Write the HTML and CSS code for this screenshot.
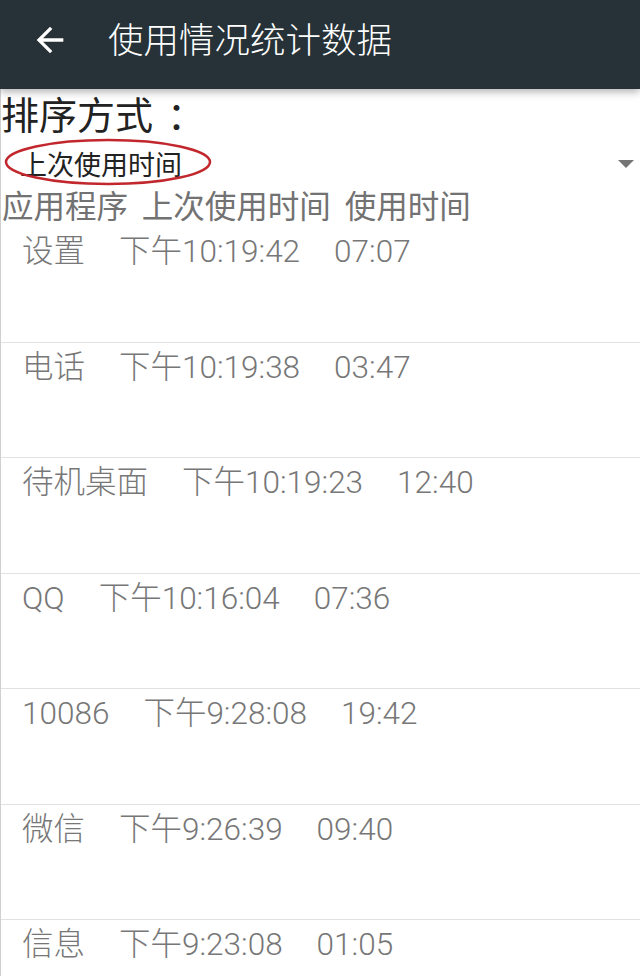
FILE: index.html
```html
<!DOCTYPE html>
<html lang="zh-CN">
<head>
    <meta charset="UTF-8">
    <title>使用情况统计数据</title>
    <link rel="stylesheet" href="styles.css">
</head>
<body>

<header class="toolbar">
    <svg class="back" viewBox="0 0 24 24" width="40" height="40">
        <path d="M20 11H7.83l5.59-5.59L12 4l-8 8 8 8 1.41-1.41L7.83 13H20v-2z" fill="#fff"/>
    </svg>
    <h1 class="title">使用情况统计数据</h1>
</header>

<main class="content">
    <div class="sort-label">排序方式<span class="colon">：</span></div>

    <div class="spinner">
        <span class="spinner-value">上次使用时间</span>
        <span class="spinner-arrow"></span>
        <svg class="mark" viewBox="0 0 210 50" width="210" height="50">
            <ellipse cx="105" cy="25" rx="102" ry="22" fill="none" stroke="#c1272d" stroke-width="2.5"/>
        </svg>
    </div>

    <div class="list-head">应用程序 上次使用时间 使用时间</div>

    <ul class="usage-list">
        <li class="usage-row"><span>设置</span><span>下午10:19:42</span><span>07:07</span></li>
        <li class="usage-row"><span>电话</span><span>下午10:19:38</span><span>03:47</span></li>
        <li class="usage-row"><span>待机桌面</span><span>下午10:19:23</span><span>12:40</span></li>
        <li class="usage-row"><span>QQ</span><span>下午10:16:04</span><span>07:36</span></li>
        <li class="usage-row"><span>10086</span><span>下午9:28:08</span><span>19:42</span></li>
        <li class="usage-row"><span>微信</span><span>下午9:26:39</span><span>09:40</span></li>
        <li class="usage-row"><span>信息</span><span>下午9:23:08</span><span>01:05</span></li>
    </ul>
</main>

</body>
</html>
```

FILE: styles.css
```css
body {
    margin: 0;
    font-family: Roboto, "Noto Sans CJK SC", sans-serif;
    background-color: #fff;
    color: #222;
    overflow: hidden;
}
.toolbar {
    position: relative;
    z-index: 2;
    height: 89px;
    display: flex;
    align-items: center;
    gap: 38px;
    padding-left: 30px;
    padding-bottom: 14px;
    box-sizing: border-box;
    background-color: #263238;
    box-shadow: 0 3px 8px rgba(0,0,0,0.3);
}
.back {
    display: block;
    flex: none;
    margin-top: 4px;
}
.title {
    margin: 0;
    font-size: 35.5px;
    font-weight: 300;
    color: #fff;
}
.content {
    border-left: 1px solid #cfcfcf;
    min-height: 887px;
}
.sort-label {
    height: 48px;
    padding-top: 7px;
    box-sizing: border-box;
    font-size: 38px;
    line-height: 40px;
    color: #222;
}
.colon {
    margin-left: 14px;
}
.spinner {
    position: relative;
    height: 52px;
    display: flex;
    align-items: center;
    justify-content: space-between;
    padding: 0 6px 0 19px;
}
.spinner-value {
    font-size: 27px;
    color: #222;
}
.spinner-arrow {
    width: 0;
    height: 0;
    border-left: 8px solid transparent;
    border-right: 8px solid transparent;
    border-top: 8px solid #757575;
    margin-top: 2px;
}
.mark {
    position: absolute;
    left: 2px;
    top: 0;
}
.list-head {
    padding-left: 1px;
    font-size: 31.5px;
    line-height: 38px;
    word-spacing: 6px;
    color: #727272;
}
.usage-list {
    list-style: none;
    margin: 0;
    padding: 0;
}
.usage-row {
    height: 115.5px;
    box-sizing: border-box;
    display: flex;
    gap: 34px;
    padding: 7px 0 0 21px;
    font-size: 31.5px;
    font-weight: 300;
    line-height: 36px;
    color: #777;
    border-bottom: 1px solid #e2e2e2;
}
```
